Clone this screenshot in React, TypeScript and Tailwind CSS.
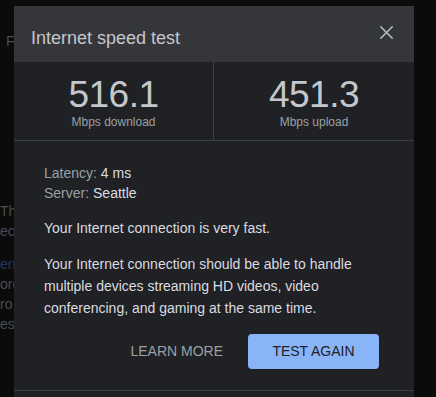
import { X } from "lucide-react";

const bgLines = [
  { text: "Th", top: "mt-[150px]", color: "text-[#4a4d52]" },
  { text: "ec", top: "", color: "text-[#4a4d52]" },
  { text: "en", top: "mt-[13px]", color: "text-[#233a5e]" },
  { text: "ord", top: "", color: "text-[#4a4d52]" },
  { text: "ro", top: "", color: "text-[#4a4d52]" },
  { text: "esn", top: "", color: "text-[#4a4d52]" },
];

function Stat({ value, label }: { value: string; label: string }) {
  return (
    <div className="flex flex-col items-center pt-[13px]">
      <div className="text-[37px] leading-[40px] tracking-[-0.5px] text-[#c4c7cb]">{value}</div>
      <div className="text-[12px] leading-[14px] text-[#9aa0a6]">{label}</div>
    </div>
  );
}

export default function App() {
  return (
    <div
      className="relative w-[436px] h-[397px] overflow-hidden bg-[#0b0b0c]"
      style={{ fontFamily: '"Liberation Sans", Arial, sans-serif' }}
    >
      {/* page behind the dialog, only its left edge shows */}
      <div className="w-[14px] overflow-hidden whitespace-nowrap flex flex-col text-[14px] leading-[20px] pt-[31px]">
        <div className="pl-[6px] text-[#4a4d52]">F</div>
        {bgLines.map((l) => (
          <div key={l.text} className={`${l.top} ${l.color}`}>
            {l.text}
          </div>
        ))}
      </div>

      {/* dialog */}
      <div className="absolute left-[14px] top-[6px] w-[400px] h-[400px] bg-[#202124] flex flex-col">
        <div className="h-[56px] bg-[#35363a] flex items-center justify-between pl-[17px] pr-[16px]">
          <span className="text-[18px] text-[#c4c7cb] pt-[8px]">Internet speed test</span>
          <X className="w-[23px] h-[23px] text-[#bdc1c6] -mt-[4px]" strokeWidth={1.5} />
        </div>

        <div className="grid grid-cols-2 h-[79px] border-b border-[#3c4043]">
          <div className="border-r border-[#3c4043]">
            <Stat value="516.1" label="Mbps download" />
          </div>
          <Stat value="451.3" label="Mbps upload" />
        </div>

        <div className="pl-[30px] pr-[30px] pt-[22px] text-[14px] leading-[20px] text-[#9aa0a6]">
          <div>
            Latency: <span className="text-[#dadce0] font-medium">4 ms</span>
          </div>
          <div>
            Server: <span className="text-[#dadce0] font-medium">Seattle</span>
          </div>
          <p className="mt-[15px] text-[#dadce0]">Your Internet connection is very fast.</p>
          <p className="mt-[15px] leading-[22px] text-[#dadce0]">
            Your Internet connection should be able to handle multiple devices streaming HD videos, video
            conferencing, and gaming at the same time.
          </p>
        </div>

        <div className="flex items-center justify-end gap-[12px] pr-[35px] mt-[15px]">
          <button className="px-[13px] h-[35px] text-[14px] text-[#9aa0a6]">LEARN MORE</button>
          <button className="w-[131px] h-[35px] rounded-[4px] bg-[#8ab4f8] text-[14px] text-[#202124]">
            TEST AGAIN
          </button>
        </div>

        <div className="mt-[21px] border-t border-[#3c4043]" />
      </div>
    </div>
  );
}
